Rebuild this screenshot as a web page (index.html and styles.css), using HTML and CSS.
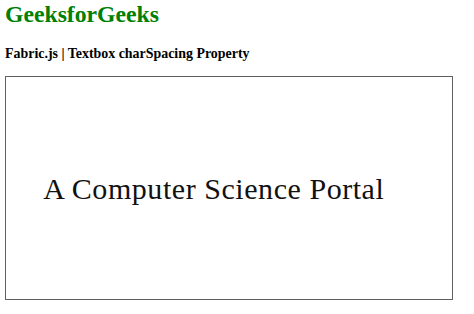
FILE: index.html
```html
<!DOCTYPE html>
<html>
<head>
<meta charset="utf-8">
<link rel="stylesheet" href="styles.css">
</head>
<body>
<div class="page">
  <h1 class="title">GeeksforGeeks</h1>
  <h3 class="subtitle">Fabric.js | Textbox charSpacing Property</h3>
  <div class="canvas">
    <div class="textbox">A Computer Science Portal</div>
  </div>
</div>
</body>
</html>
```

FILE: styles.css
```css
html, body {
  margin: 0;
  padding: 0;
  background: #ffffff;
}
.page {
  padding: 1.2px 0 0 5px;
  font-family: "Liberation Serif", "Times New Roman", serif;
}
.title {
  margin: 0;
  font-size: 23.7px;
  line-height: 27px;
  font-weight: bold;
  color: #008000;
}
.subtitle {
  margin: 17.4px 0 0;
  font-size: 13.93px;
  line-height: 16px;
  font-weight: bold;
  color: #000;
}
.canvas {
  margin-top: 14.2px;
  width: 446px;
  height: 222px;
  border: 1px solid #606060;
  box-sizing: content-box;
}
.textbox {
  padding: 95px 0 0 37.2px;
  font-size: 30px;
  line-height: 34px;
  letter-spacing: 0.55px;
  color: #111;
  white-space: nowrap;
}
```
